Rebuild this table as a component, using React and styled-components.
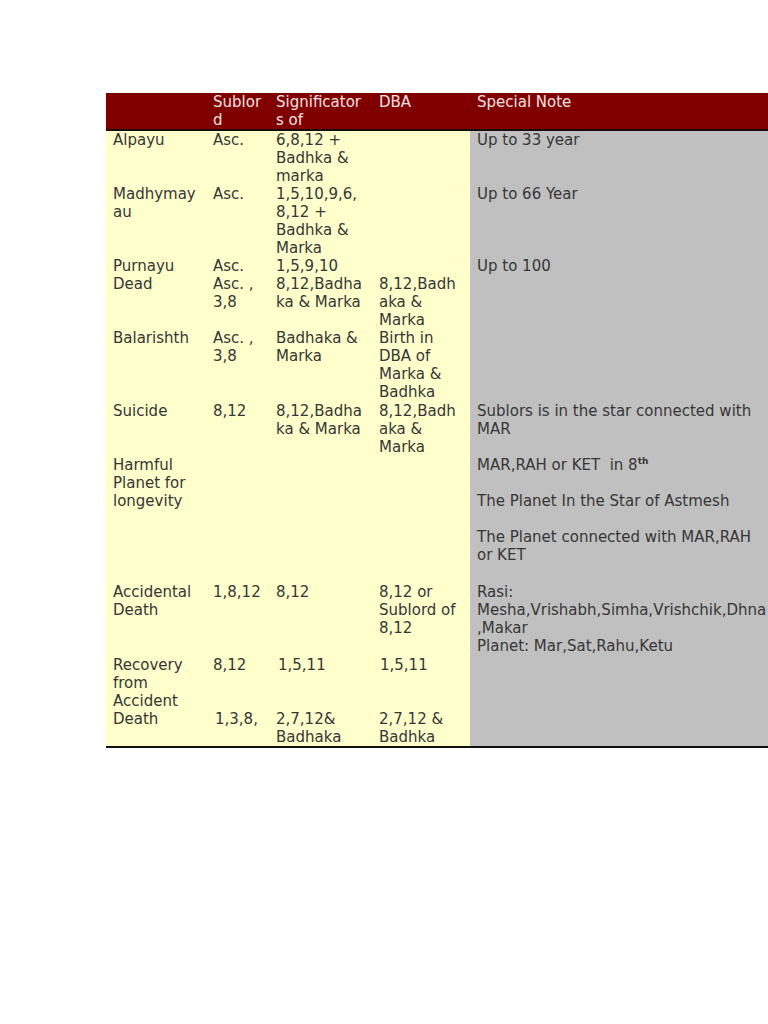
import React from "react";
import styled, { createGlobalStyle } from "styled-components";

const GlobalStyle = createGlobalStyle`
  html, body {
    margin: 0;
    padding: 0;
    background: #ffffff;
    overflow: hidden;
  }
`;

const Page = styled.div`
  width: 768px;
  height: 1024px;
  overflow: hidden;
  padding: 93px 0 0 106px;
  box-sizing: border-box;
`;

const Table = styled.table`
  border-collapse: collapse;
  table-layout: fixed;
  width: 740px;
  font-family: "DejaVu Sans", "Liberation Sans", sans-serif;
  font-size: 15px;
  line-height: 18px;
  color: #363636;
  border-bottom: 2px solid #111;
`;

const Head = styled.thead`
  background: #800000;
  color: #f0e2e2;
  border-bottom: 2px solid #1a0a0a;
`;

const Th = styled.th`
  font-weight: normal;
  text-align: left;
  vertical-align: top;
  padding: 0 0 0 7px;
  height: 36px;
`;

const Row = styled.tr`
  & > td {
    padding-bottom: ${(p) => (p.$extra ? 1 : 0)}px;
  }
`;

const Td = styled.td`
  vertical-align: top;
  padding-top: 0;
  padding-right: 0;
  padding-left: ${(p) => p.$indent || 7}px;
  background: ${(p) => (p.$note ? "#c0c0c0" : "#ffffcc")};
  white-space: nowrap;
`;

const Gap = styled.div`
  height: 18px;
`;

const Sup = styled.sup`
  font-size: 9px;
  line-height: 0;
  font-weight: bold;
`;

const cols = [100, 63, 103, 98, 376];

const rows = [
  { cells: [["Alpayu"], ["Asc."], ["6,8,12 +", "Badhka &", "marka"], [], ["Up to 33 year"]] },
  { cells: [["Madhymay", "au"], ["Asc."], ["1,5,10,9,6,", "8,12 +", "Badhka &", "Marka"], [], ["Up to 66 Year"]] },
  { cells: [["Purnayu"], ["Asc."], ["1,5,9,10"], [], ["Up to 100"]] },
  { cells: [["Dead"], ["Asc. ,", "3,8"], ["8,12,Badha", "ka & Marka"], ["8,12,Badh", "aka &", "Marka"], []] },
  {
    extra: true,
    cells: [["Balarishth"], ["Asc. ,", "3,8"], ["Badhaka &", "Marka"], ["Birth in", "DBA of", "Marka &", "Badhka"], []],
  },
  {
    cells: [
      ["Suicide"],
      ["8,12"],
      ["8,12,Badha", "ka & Marka"],
      ["8,12,Badh", "aka &", "Marka"],
      ["Sublors is in the star connected with", "MAR"],
    ],
  },
  {
    extra: true,
    cells: [
      ["Harmful", "Planet for", "longevity"],
      [],
      [],
      [],
      [
        <>MAR,RAH or KET&nbsp; in 8<Sup>th</Sup></>,
        null,
        "The Planet In the Star of Astmesh",
        null,
        "The Planet connected with MAR,RAH",
        "or KET",
        null,
      ],
    ],
  },
  {
    extra: true,
    cells: [
      ["Accidental", "Death"],
      ["1,8,12"],
      ["8,12"],
      ["8,12 or", "Sublord of", "8,12"],
      ["Rasi:", "Mesha,Vrishabh,Simha,Vrishchik,Dhna", ",Makar", "Planet: Mar,Sat,Rahu,Ketu"],
    ],
  },
  { cells: [["Recovery", "from", "Accident"], ["8,12"], ["1,5,11"], ["1,5,11"], []], indents: [7, 7, 9, 8, 7] },
  { cells: [["Death"], ["1,3,8,"], ["2,7,12&", "Badhaka"], ["2,7,12 &", "Badhka"], []], indents: [7, 9, 7, 7, 7] },
];

function Cell({ lines, note, indent }) {
  return (
    <Td $note={note} $indent={indent}>
      {lines.map((line, i) =>
        line === null ? <Gap key={i} /> : <div key={i}>{line}</div>
      )}
    </Td>
  );
}

export default function App() {
  return (
    <>
      <GlobalStyle />
      <Page>
        <Table>
          <colgroup>
            {cols.map((w, i) => (
              <col key={i} style={{ width: w }} />
            ))}
          </colgroup>
          <Head>
            <tr>
              <Th></Th>
              <Th>Sublor<br />d</Th>
              <Th>Significator<br />s of</Th>
              <Th>DBA</Th>
              <Th>Special Note</Th>
            </tr>
          </Head>
          <tbody>
            {rows.map((r, i) => (
              <Row key={i} $extra={r.extra}>
                {r.cells.map((lines, j) => (
                  <Cell
                    key={j}
                    lines={lines}
                    note={j === 4}
                    indent={r.indents ? r.indents[j] : 7}
                  />
                ))}
              </Row>
            ))}
          </tbody>
        </Table>
      </Page>
    </>
  );
}
